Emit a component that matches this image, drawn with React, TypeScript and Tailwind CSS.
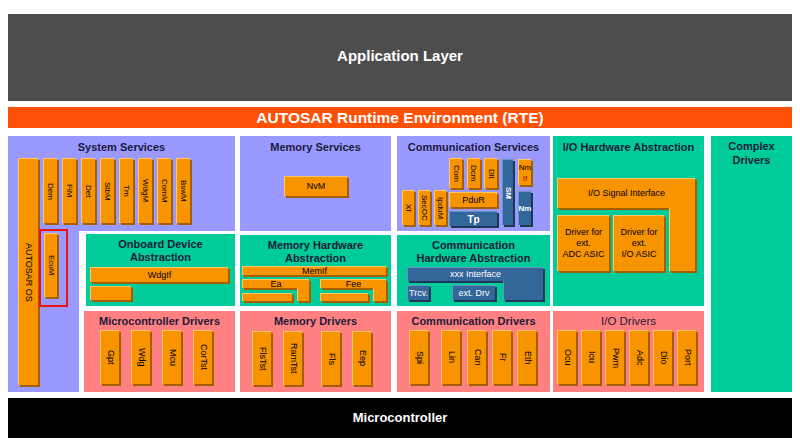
import React from 'react';

type Kind = 'orange' | 'blue';

// module boxes: light top/left edge and a hard drop shadow, like the slide
const fills: Record<Kind, string> = {
  orange: 'bg-[#f89400] border-t border-l border-[#ffc766] shadow-[2px_2px_0_#a35f00] text-black',
  blue: 'bg-[#336699] border-t border-l border-[#6a94c0] shadow-[2px_2px_0_#1c3856] text-white',
};

// leg of an L-shaped block: no top edge, it continues the bar above
const legFills: Record<Kind, string> = {
  orange: 'bg-[#f89400] border-l border-[#ffc766] shadow-[2px_2px_0_#a35f00]',
  blue: 'bg-[#336699] border-l border-[#6a94c0] shadow-[2px_2px_0_#1c3856]',
};

const Box = ({
  kind = 'orange',
  vertical,
  className = '',
  children,
}: {
  kind?: Kind;
  vertical?: boolean;
  className?: string;
  children?: React.ReactNode;
}) => (
  <div
    className={`flex shrink-0 items-center justify-center text-center leading-[11px] ${fills[kind]} ${className}`}
  >
    {vertical ? <span className="[writing-mode:vertical-rl] whitespace-nowrap">{children}</span> : children}
  </div>
);

const Leg = ({ kind = 'orange', className = '' }: { kind?: Kind; className?: string }) => (
  <div className={`shrink-0 ${legFills[kind]} ${className}`} />
);

const Title = ({ className = '', children }: { className?: string; children: React.ReactNode }) => (
  <div className={`text-center text-[11px] font-bold text-[#1b1b3a] ${className}`}>{children}</div>
);

const Panel = ({ color, className = '', children }: { color: 'purple' | 'green' | 'pink'; className?: string; children?: React.ReactNode }) => {
  const bg = color === 'purple' ? 'bg-[#9999ff]' : color === 'green' ? 'bg-[#00cc99]' : 'bg-[#ff8080]';
  return <div className={`flex flex-col ${bg} ${className}`}>{children}</div>;
};

// Ea / Fee shaped blocks inside Memory Hardware Abstraction
const MemGroup = ({ label, width, legWidth }: { label: string; width: string; legWidth: string }) => (
  <div className={`flex flex-col ${width}`}>
    <Box className="h-[9px] text-[9px] leading-none">{label}</Box>
    <div className="flex">
      <Box className="mt-[5px] mr-[5px] h-[8px] flex-1" />
      <Leg className={`h-[13px] ${legWidth}`} />
    </div>
  </div>
);

const DriverRow = ({ items, className }: { items: { name: string; cls: string }[]; className: string }) => (
  <div className={`flex ${className}`}>
    {items.map((m) => (
      <Box key={m.name} vertical className={`w-[19px] h-[54px] text-[9px] ${m.cls}`}>
        {m.name}
      </Box>
    ))}
  </div>
);

const systemModules = ['Dem', 'FiM', 'Det', 'StbM', 'Tm', 'WdgM', 'ComM', 'BswM'];

export default function App() {
  return (
    <div className="w-[800px] h-[444px] overflow-hidden bg-white px-[8px] pt-[14px] font-['Liberation_Sans',Arial,sans-serif]">
      <div className="flex h-[87px] items-center justify-center bg-[#4d4d4d] pb-[2px] text-[15px] font-bold text-white">
        Application Layer
      </div>
      <div className="mt-[6px] flex h-[21px] items-center justify-center bg-[#ff5008] text-[15.5px] font-bold text-white">
        AUTOSAR Runtime Environment (RTE)
      </div>

      <div className="mt-[8px] flex h-[256px]">
        {/* System Services column */}
        <Panel color="purple" className="w-[227px] shrink-0">
          <Title className="flex h-[22px] items-center justify-center">System Services</Title>
          <div className="flex flex-1">
            <Box vertical className="ml-[10px] w-[20px] h-[227px] text-[9px]">
              AUTOSAR OS
            </Box>
            <div className="flex flex-1 flex-col">
              <div className="flex h-[67px] gap-[5px] pl-[5px]">
                {systemModules.map((m) => (
                  <Box key={m} vertical className="w-[14px] h-[65px] text-[8px]">
                    {m}
                  </Box>
                ))}
              </div>
              <div className="mt-[4px] flex flex-1">
                <div className="w-[41px] shrink-0">
                  <div className="ml-[1px] h-[78px] w-[29px] border-2 border-[#ee1111] pl-[3px] pt-[2px]">
                    <Box vertical className="w-[13px] h-[64px] text-[8px]">
                      EcuM
                    </Box>
                  </div>
                </div>
                <div className="mt-[2px] flex flex-1 flex-col bg-white">
                  <Panel color="green" className="ml-[7px] mt-[3px] h-[72px] pt-[4px]">
                    <Title className="leading-[13px]">
                      Onboard Device
                      <br />
                      Abstraction
                    </Title>
                    <Box className="ml-[4px] mt-[3px] w-[138px] h-[15px] text-[9px]">WdgIf</Box>
                    <Box className="ml-[4px] mt-[4px] w-[41px] h-[14px]" />
                  </Panel>
                  <Panel color="pink" className="ml-[5px] mt-[5px] flex-1 pt-[4px]">
                    <Title className="leading-[13px]">Microcontroller Drivers</Title>
                    <DriverRow
                      className="mt-[2px] gap-[12px] pl-[16px]"
                      items={['Gpt', 'Wdg', 'Mcu', 'CorTst'].map((name) => ({ name, cls: '' }))}
                    />
                  </Panel>
                </div>
              </div>
            </div>
          </div>
        </Panel>

        {/* Memory column */}
        <div className="ml-[5px] flex w-[151px] shrink-0 flex-col">
          <Panel color="purple" className="h-[95px] items-center">
            <Title className="flex h-[22px] w-full items-center justify-center">Memory Services</Title>
            <Box className="mt-[18px] w-[63px] h-[20px] text-[9px]">NvM</Box>
          </Panel>
          <Panel color="green" className="mt-[4px] h-[71px] pt-[4px]">
            <Title className="leading-[13px]">
              Memory Hardware
              <br />
              Abstraction
            </Title>
            <div className="ml-[2px] mt-px w-[144px]">
              <Box className="h-[9px] text-[9px] leading-none">MemIf</Box>
              <div className="mt-[4px] flex justify-between">
                <MemGroup label="Ea" width="w-[67px]" legWidth="w-[12px]" />
                <MemGroup label="Fee" width="w-[66px]" legWidth="w-[13px]" />
              </div>
            </div>
          </Panel>
          <Panel color="pink" className="mt-[5px] flex-1 pt-[4px]">
            <Title className="leading-[13px]">Memory Drivers</Title>
            <DriverRow
              className="mt-[3px] pl-[12px]"
              items={[
                { name: 'FlsTst', cls: '' },
                { name: 'RamTst', cls: 'ml-[12px]' },
                { name: 'Fls', cls: 'ml-[19px]' },
                { name: 'Eep', cls: 'ml-[12px]' },
              ]}
            />
          </Panel>
        </div>

        {/* Communication column */}
        <div className="ml-[6px] flex w-[153px] shrink-0 flex-col">
          <Panel color="purple" className="h-[95px]">
            <Title className="flex h-[22px] items-center justify-center">Communication Services</Title>
            <div className="flex pl-[5px]">
              <div className="mt-[32px] flex gap-[4px]">
                {['Xf', 'SecOC', 'IpduM'].map((m) => (
                  <Box key={m} vertical className="w-[12px] h-[35px] text-[8px]">
                    {m}
                  </Box>
                ))}
              </div>
              <div className="ml-[3px] flex w-[48px] flex-col">
                <div className="flex justify-between">
                  {['Com', 'Dcm', 'Dlt'].map((m) => (
                    <Box key={m} vertical className="w-[13px] h-[30px] text-[8px]">
                      {m}
                    </Box>
                  ))}
                </div>
                <Box className="mt-[4px] h-[15px] text-[9px]">PduR</Box>
                <Box kind="blue" className="mt-[4px] h-[15px] text-[10px] font-bold">
                  Tp
                </Box>
              </div>
              <Box kind="blue" vertical className="ml-[5px] mt-px w-[11px] h-[66px] text-[8px] font-bold">
                SM
              </Box>
              <div className="ml-[5px] mt-px flex w-[13px] flex-col">
                <Box className="h-[26px] text-[8px] leading-[9px]">
                  <span>
                    Nm
                    <br />
                    <span className="text-[#a01010]">If</span>
                  </span>
                </Box>
                <Box kind="blue" className="mt-[6px] h-[34px] text-[8px] font-bold">
                  Nm
                </Box>
              </div>
            </div>
          </Panel>
          <Panel color="green" className="mt-[4px] h-[71px] pt-[4px]">
            <Title className="leading-[13px]">
              Communication
              <br />
              Hardware Abstraction
            </Title>
            <div className="ml-[10px] mt-[2px] flex w-[136px] flex-col">
              <Box kind="blue" className="h-[14px] text-[9px]">
                xxx Interface
              </Box>
              <div className="flex">
                <Box kind="blue" className="mt-[4px] w-[22px] h-[15px] text-[9px]">
                  Trcv.
                </Box>
                <Box kind="blue" className="ml-[23px] mt-[4px] w-[43px] h-[15px] text-[9px]">
                  ext. Drv
                </Box>
                <div className="flex-1" />
                <Leg kind="blue" className="w-[40px] h-[19px]" />
              </div>
            </div>
          </Panel>
          <Panel color="pink" className="mt-[5px] flex-1 pt-[4px]">
            <Title className="leading-[13px]">Communication Drivers</Title>
            <DriverRow
              className="mt-[2px] pl-[12px]"
              items={[
                { name: 'Spi', cls: '' },
                { name: 'Lin', cls: 'ml-[13px]' },
                { name: 'Can', cls: 'ml-[7px]' },
                { name: 'Fr', cls: 'ml-[6px]' },
                { name: 'Eth', cls: 'ml-[6px]' },
              ]}
            />
          </Panel>
        </div>

        {/* I/O column */}
        <div className="ml-[3px] flex w-[151px] shrink-0 flex-col">
          <Panel color="green" className="h-[170px]">
            <Title className="flex h-[22px] items-center justify-center">I/O Hardware Abstraction</Title>
            <div className="ml-[4px] mt-[20px] flex w-[138px] flex-col">
              <Box className="h-[30px] text-[9px]">I/O Signal Interface</Box>
              <div className="flex">
                <Box className="mt-[7px] w-[52px] h-[56px] text-[9px]">
                  Driver for
                  <br />
                  ext.
                  <br />
                  ADC ASIC
                </Box>
                <Box className="ml-[4px] mt-[7px] w-[51px] h-[56px] text-[9px]">
                  Driver for
                  <br />
                  ext.
                  <br />
                  I/O ASIC
                </Box>
                <div className="flex-1" />
                <Leg className="w-[26px] h-[63px]" />
              </div>
            </div>
          </Panel>
          <Panel color="pink" className="mt-[5px] flex-1 pt-[4px]">
            <div className="text-center text-[11.5px] leading-[13px] text-[#1b1b3a]">I/O Drivers</div>
            <DriverRow
              className="mt-[2px] gap-[5px] pl-[4px]"
              items={['Ocu', 'Icu', 'Pwm', 'Adc', 'Dio', 'Port'].map((name) => ({ name, cls: '' }))}
            />
          </Panel>
        </div>

        {/* Complex Drivers */}
        <Panel color="green" className="ml-[7px] w-[81px] shrink-0 pt-[3px]">
          <Title className="leading-[14px]">
            Complex
            <br />
            Drivers
          </Title>
        </Panel>
      </div>

      <div className="mt-[6px] flex h-[40px] items-center justify-center bg-black text-[13px] font-bold text-white">
        Microcontroller
      </div>
    </div>
  );
}
